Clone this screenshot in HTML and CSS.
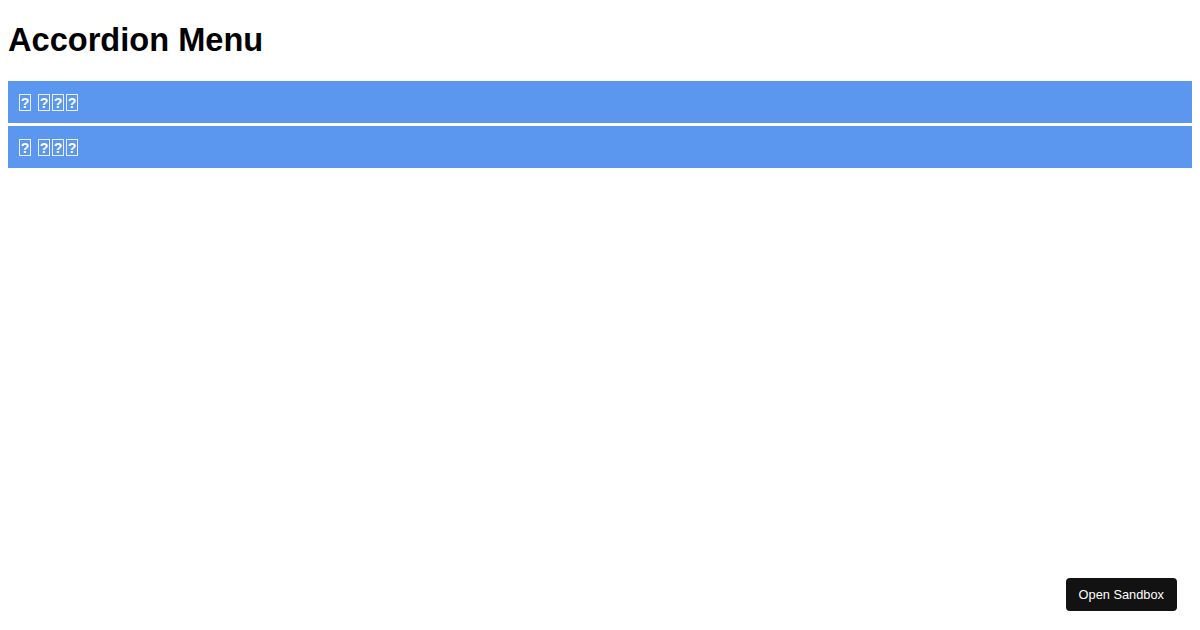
FILE: index.html
```html
<!DOCTYPE html>
<html lang="ko">
<head>
<meta charset="utf-8">
<title>Accordion Menu</title>
<link rel="stylesheet" href="styles.css">
</head>
<body>
<h1 class="title">Accordion Menu</h1>
<div class="accordion">
  <div class="item">
    <div class="item-header">
      <span class="glyphs"><span class="tofu">?</span></span>
      <span class="glyphs"><span class="tofu">?</span><span class="tofu">?</span><span class="tofu">?</span></span>
    </div>
  </div>
  <div class="item">
    <div class="item-header">
      <span class="glyphs"><span class="tofu">?</span></span>
      <span class="glyphs"><span class="tofu">?</span><span class="tofu">?</span><span class="tofu">?</span></span>
    </div>
  </div>
</div>
<a class="sandbox-btn" href="#">Open Sandbox</a>
</body>
</html>
```
FILE: styles.css
```css
body {
  margin: 8px;
  font-family: "Liberation Sans", Arial, sans-serif;
  background: #ffffff;
  color: #000000;
}
.title {
  font-size: 32.6px;
  font-weight: bold;
  margin: 13px 0 22px;
}
.accordion {
  display: flex;
  flex-direction: column;
  gap: 3px;
}
.item-header {
  background: #5b97ef;
  color: #ffffff;
  font-size: 18px;
  font-weight: bold;
  height: 42px;
  padding: 0 11px;
  display: flex;
  align-items: center;
  gap: 7px;
}
.glyphs {
  display: flex;
  gap: 2px;
}
.tofu {
  width: 10px;
  height: 15px;
  border: 1px solid #e8f0fd;
  display: flex;
  align-items: center;
  justify-content: center;
  font-size: 14px;
  font-weight: bold;
  line-height: 1;
  color: #ffffff;
  margin-top: 1px;
}
.sandbox-btn {
  position: fixed;
  right: 23px;
  bottom: 19px;
  height: 33px;
  display: flex;
  align-items: center;
  background: #121212;
  color: #ffffff;
  font-size: 12.8px;
  text-decoration: none;
  padding: 0 13px;
  border-radius: 4px;
}
```
